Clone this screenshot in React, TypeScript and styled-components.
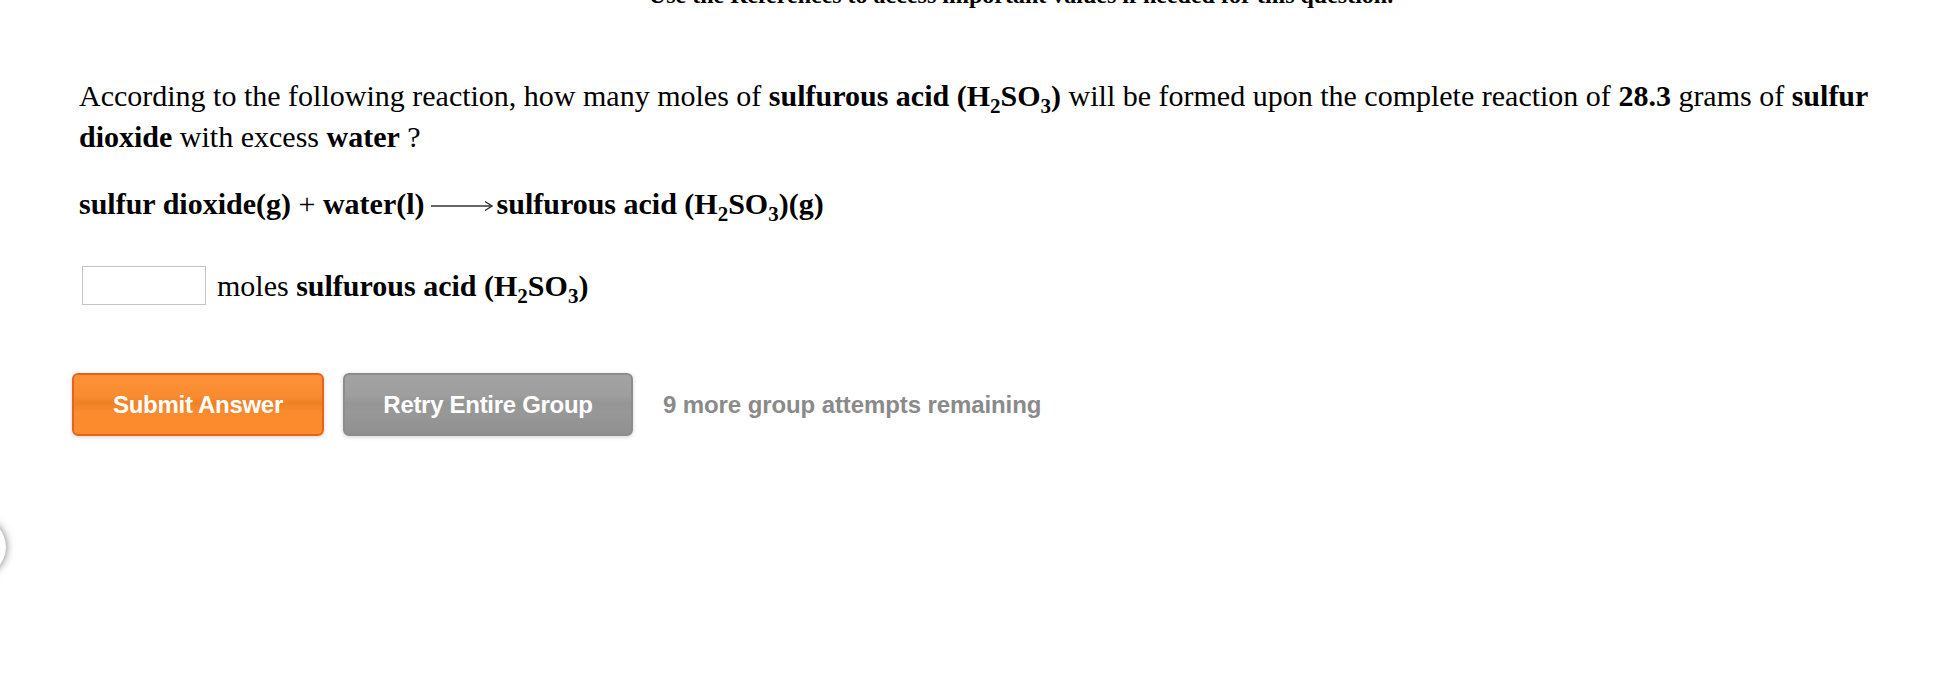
import React from "react"
import styled, { createGlobalStyle } from "styled-components"

const GlobalStyle = createGlobalStyle`
  html, body {
    margin: 0;
    padding: 0;
    background: #fff;
  }
  body {
    font-family: "Liberation Serif", "Times New Roman", serif;
    color: #000;
    overflow: hidden;
  }
`

const Page = styled.div`
  position: relative;
  width: 1951px;
  height: 694px;
  overflow: hidden;
`

const Header = styled.div`
  margin-top: -18px;
  text-align: center;
  font-weight: bold;
  font-size: 24px;
  line-height: 27px;
  padding-left: 91px;
`

const Content = styled.div`
  display: flex;
  flex-direction: column;
  padding: 0 50px 0 79px;
`

const Question = styled.p`
  margin: 66px 0 0;
  font-size: 30px;
  line-height: 41px;
`

const Equation = styled.p`
  margin: 26px 0 0;
  font-size: 30px;
  line-height: 41px;
  display: flex;
  align-items: center;
  white-space: pre;
`

const Sub = styled.sub`
  font-size: 0.7em;
  line-height: 0;
  vertical-align: -0.32em;
`

const Arrow = styled.svg`
  width: 62px;
  height: 14px;
  margin: 4px 4px 0 6px;
`

const AnswerRow = styled.div`
  margin-top: 42px;
  display: flex;
  align-items: center;
  gap: 11px;
  font-size: 30px;
  line-height: 39px;
`

const AnswerInput = styled.input`
  box-sizing: border-box;
  width: 124px;
  height: 39px;
  margin-left: 3px;
  border: 1px solid #c4c4c4;
  background: #fff;
  padding: 0 6px;
  font-size: 22px;
`

const Actions = styled.div`
  margin: 68px 0 0 -7px;
  display: flex;
  align-items: center;
`

const Button = styled.button<{ tone: "orange" | "gray" }>`
  box-sizing: border-box;
  height: 63px;
  padding: 0 30px;
  border-radius: 6px;
  font-family: "Liberation Sans", Arial, Helvetica, sans-serif;
  font-weight: bold;
  font-size: 24px;
  letter-spacing: -0.3px;
  color: #fff;
  box-shadow: 0 1px 4px rgba(0, 0, 0, 0.18);
  ${({ tone }) =>
    tone === "orange"
      ? `
    border: 2px solid #e9621a;
    background: linear-gradient(#fd9236 0%, #f98b30 35%, #ef8125 48%, #fb8a2e 62%, #fd8c2e 100%);
  `
      : `
    border: 2px solid #8c8c8c;
    background: linear-gradient(#a3a3a3 0%, #9e9e9e 35%, #959595 48%, #989898 62%, #909090 100%);
  `}
`

const SubmitButton = styled(Button)`
  width: 252px;
  margin-right: 19px;
`

const RetryButton = styled(Button)`
  width: 290px;
  margin-right: 30px;
`

const Remaining = styled.span`
  font-family: "Liberation Sans", Arial, Helvetica, sans-serif;
  font-weight: bold;
  font-size: 24px;
  color: #8a8a8a;
  letter-spacing: -0.1px;
`

const EdgeBubble = styled.div`
  position: absolute;
  left: -52px;
  top: 518px;
  width: 58px;
  height: 58px;
  border-radius: 50%;
  background: #fff;
  box-shadow: 0 0 8px rgba(0, 0, 0, 0.55);
`

const H2SO3 = () => (
  <>
    (H<Sub>2</Sub>SO<Sub>3</Sub>)
  </>
)

export default function App() {
  return (
    <Page>
      <GlobalStyle />
      <Header>Use the References to access important values if needed for this question.</Header>
      <Content>
        <Question>
          According to the following reaction, how many moles of <b>sulfurous acid <H2SO3 /></b> will be
          formed upon the complete reaction of <b>28.3</b> grams of <b>sulfur dioxide</b> with excess{" "}
          <b>water</b> ?
        </Question>
        <Equation>
          <b>sulfur dioxide(g)</b> + <b>water(l)</b>
          <Arrow viewBox="0 0 62 14">
            <line x1="0" y1="7" x2="60" y2="7" stroke="#333" strokeWidth="1.4" />
            <path d="M54 2.5 L61 7 L54 11.5" fill="none" stroke="#333" strokeWidth="1.4" />
          </Arrow>
          <b>
            sulfurous acid <H2SO3 />(g)
          </b>
        </Equation>
        <AnswerRow>
          <AnswerInput type="text" aria-label="moles" />
          <span>
            moles{" "}
            <b>
              sulfurous acid <H2SO3 />
            </b>
          </span>
        </AnswerRow>
        <Actions>
          <SubmitButton tone="orange">Submit Answer</SubmitButton>
          <RetryButton tone="gray">Retry Entire Group</RetryButton>
          <Remaining>9 more group attempts remaining</Remaining>
        </Actions>
      </Content>
      <EdgeBubble />
    </Page>
  )
}
